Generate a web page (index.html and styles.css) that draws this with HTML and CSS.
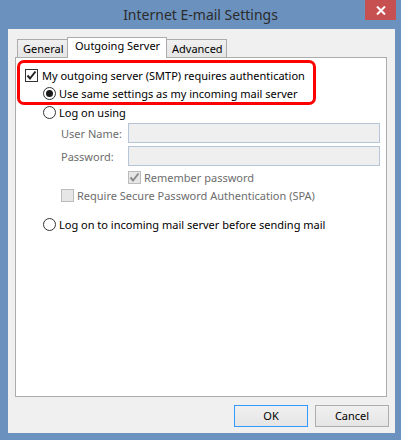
FILE: index.html
```html
<!DOCTYPE html>
<html>
<head>
<meta charset="utf-8">
<link rel="stylesheet" href="styles.css">
</head>
<body>
<div class="window">
  <div class="titlebar">
    <div></div>
    <div class="title">Internet E-mail Settings</div>
    <div class="tb-right">
      <div class="close">
        <svg width="10" height="9" viewBox="0 0 10 9"><path d="M1 0.5 L9 8.5 M9 0.5 L1 8.5" stroke="#fff" stroke-width="2"/></svg>
      </div>
    </div>
  </div>
  <div class="client">
    <div class="tabs">
      <div class="tab t-general">General</div>
      <div class="tab selected t-out">Outgoing Server</div>
      <div class="tab t-adv">Advanced</div>
    </div>
    <div class="panel">
      <div class="highlight">
        <div class="row r1">
          <span class="cb checked"><svg width="11" height="11" viewBox="0 0 11 11"><path d="M1.5 5.5 L4 8.5 L9.5 1.5" stroke="#222" stroke-width="2" fill="none"/></svg></span>
          <span class="lbl">My outgoing server (SMTP) requires authentication</span>
        </div>
        <div class="row r2">
          <span class="radio on"></span>
          <span class="lbl">Use same settings as my incoming mail server</span>
        </div>
      </div>
      <div class="row r3">
        <span class="radio"></span>
        <span class="lbl">Log on using</span>
      </div>
      <div class="field f1">
        <span class="flabel">User Name:</span>
        <span class="input"></span>
      </div>
      <div class="field f2">
        <span class="flabel">Password:</span>
        <span class="input"></span>
      </div>
      <div class="row r4">
        <span class="cb disabled"><svg width="11" height="11" viewBox="0 0 11 11"><path d="M1.5 5.5 L4 8.5 L9.5 1.5" stroke="#8a8a8a" stroke-width="2" fill="none"/></svg></span>
        <span class="lbl dis">Remember password</span>
      </div>
      <div class="row r5">
        <span class="cb disabled"></span>
        <span class="lbl dis">Require Secure Password Authentication (SPA)</span>
      </div>
      <div class="row r6">
        <span class="radio"></span>
        <span class="lbl">Log on to incoming mail server before sending mail</span>
      </div>
    </div>
    <div class="buttons">
      <div class="btn default">OK</div>
      <div class="btn">Cancel</div>
    </div>
  </div>
</div>
</body>
</html>
```

FILE: styles.css
```css
* { box-sizing: border-box; }
html, body { margin: 0; padding: 0; }
body {
  width: 401px;
  height: 440px;
  overflow: hidden;
  font-family: "Noto Sans", "Open Sans", sans-serif;
  font-size: 11px;
  color: #000;
}
.window {
  width: 401px;
  height: 440px;
  background: #6b92be;
  display: flex;
  flex-direction: column;
}
.titlebar {
  height: 29px;
  display: grid;
  grid-template-columns: 1fr auto 1fr;
  align-items: start;
}
.title {
  font-size: 14px;
  color: #2b2b2b;
  padding-top: 5px;
  line-height: 19px;
}
.tb-right {
  display: flex;
  justify-content: flex-end;
  padding-right: 5px;
}
.close {
  width: 31px;
  height: 20px;
  background: #c75050;
  display: flex;
  align-items: center;
  justify-content: center;
}
.close svg { display: block; }
.client {
  flex: 1;
  margin: 0 6px 7px 8px;
  background: #f0f0f0;
  padding: 8px 6px 6px 7px;
  display: flex;
  flex-direction: column;
}
.tabs {
  display: flex;
  align-items: flex-end;
  height: 20px;
  padding-left: 2px;
}
.tab {
  height: 18px;
  border: 1px solid #acacac;
  border-bottom: none;
  background: linear-gradient(#f0f0f0, #e5e5e5);
  line-height: 17px;
  padding-left: 5px;
  white-space: nowrap;
}
.t-general { width: 51px; }
.t-out { width: 100px; margin-left: -1px; }
.t-adv { width: 61px; margin-left: -1px; }
.tab.selected {
  height: 21px;
  background: #fff;
  position: relative;
  z-index: 1;
  margin-bottom: -1px;
  line-height: 15px;
  padding-left: 7px;
}
.panel {
  height: 340px;
  margin-right: 2px;
  background: #fff;
  border: 1px solid #acacac;
  padding: 2px 0 0 1px;
}
.highlight {
  width: 299px;
  height: 45px;
  border: 3px solid #ff0000;
  border-radius: 7px;
  padding: 3px 0 0 5px;
}
.row {
  display: flex;
  align-items: center;
  white-space: nowrap;
}
.lbl { line-height: 15px; }
.dis { color: #6d6d6d; }
.r1 { height: 18px; }
.r1 .cb { margin-right: 4px; }
.r2 { height: 18px; margin-left: 18px; }
.radio {
  width: 13px;
  height: 13px;
  border: 1px solid #333;
  border-radius: 50%;
  background: #fff;
  margin-right: 3px;
  flex: none;
  display: flex;
  align-items: center;
  justify-content: center;
}
.radio.on::after {
  content: "";
  width: 7px;
  height: 7px;
  border-radius: 50%;
  background: #1a1a1a;
}
.cb {
  width: 13px;
  height: 13px;
  border: 1px solid #333;
  background: #fff;
  flex: none;
  display: flex;
  align-items: center;
  justify-content: center;
}
.cb svg { display: block; }
.cb.disabled {
  border-color: #bcbcbc;
  background: #e6e6e6;
}
.r3 { height: 15px; margin-left: 26px; }
.field {
  display: flex;
  align-items: center;
  height: 20px;
  margin-left: 44px;
}
.f1 { margin-top: 3px; }
.f2 { margin-top: 3px; }
.flabel { width: 67px; color: #6d6d6d; }
.input {
  width: 252px;
  height: 20px;
  background: #efefef;
  border: 1px solid #b6c5d8;
}
.r4 { height: 13px; margin-top: 5px; margin-left: 111px; }
.r4 .cb, .r5 .cb { margin-right: 3px; }
.r5 { height: 13px; margin-top: 5px; margin-left: 44px; }
.r6 { height: 13px; margin-top: 16px; margin-left: 26px; }
.buttons {
  display: flex;
  justify-content: flex-end;
  gap: 7px;
  margin-top: 8px;
}
.btn {
  width: 74px;
  height: 22px;
  border: 1px solid #adadad;
  background: linear-gradient(#f0f0f0, #e5e5e5);
  text-align: center;
  line-height: 20px;
}
.btn.default { border-color: #3399ff; }
```
